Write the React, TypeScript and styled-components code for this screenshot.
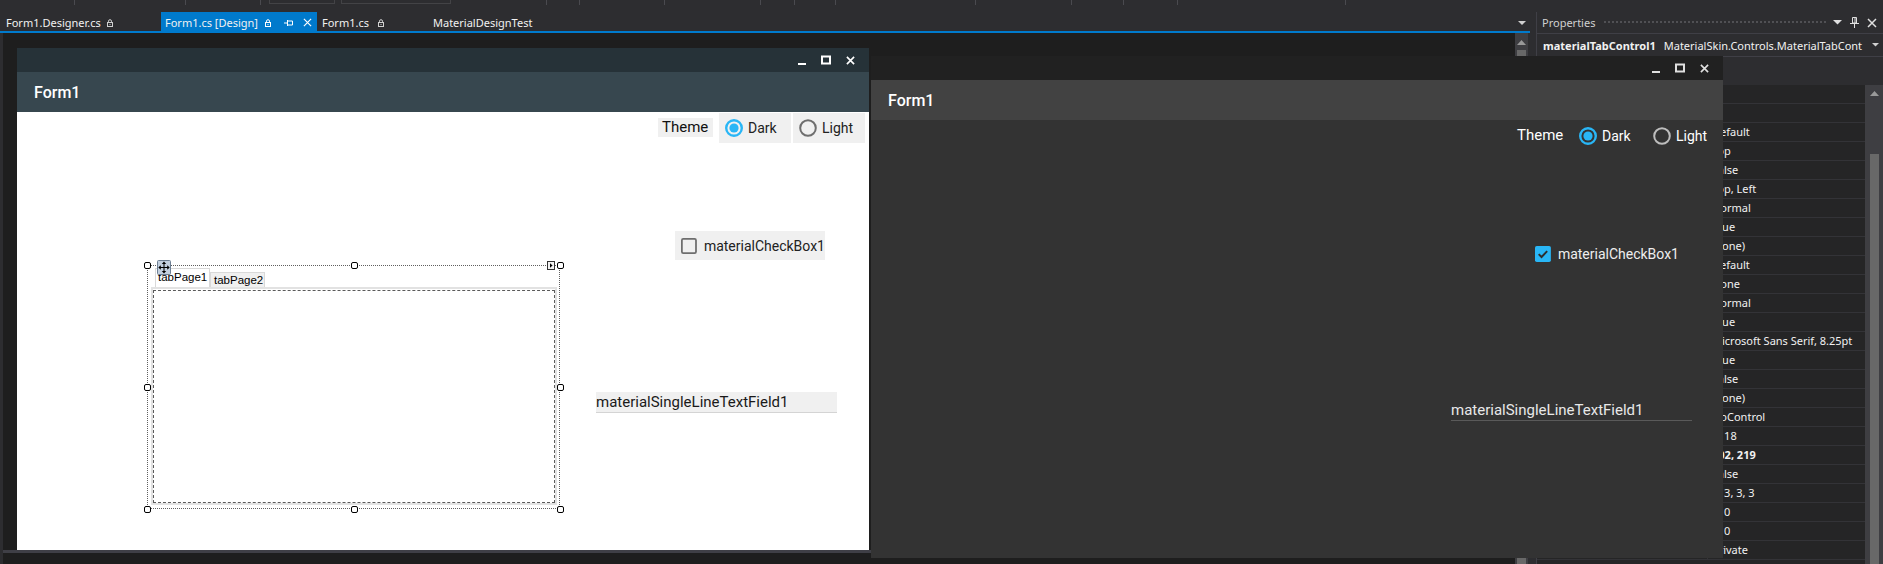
import * as React from 'react';
import styled, { createGlobalStyle, css } from 'styled-components';

const GlobalStyle = createGlobalStyle`
  html, body {
    margin: 0;
    padding: 0;
    background: #2d2d30;
  }
  body {
    overflow: hidden;
  }
`;

const Ide = styled.div`
  position: relative;
  width: 1883px;
  height: 564px;
  display: flex;
  flex-direction: column;
  background: #2d2d30;
  color: #f1f1f1;
  font-family: "Noto Sans", "Open Sans", sans-serif;
  font-size: 11px;
  overflow: hidden;
`;

/* ---------- toolbar remnant at the very top ---------- */

const TopStrip = styled.div`
  flex: none;
  height: 12px;
  display: flex;
  align-items: flex-start;
`;

const ToolSegment = styled.div<{ $w: number }>`
  flex: none;
  width: ${(p) => p.$w}px;
  height: 5px;
  box-sizing: border-box;
  border-right: 1px solid #4a4a4f;
`;

const ToolCombo = styled.div<{ $w: number; $gap: number }>`
  flex: none;
  width: ${(p) => p.$w}px;
  margin-left: ${(p) => p.$gap}px;
  height: 4px;
  box-sizing: border-box;
  border: 1px solid #434346;
  border-top: none;
`;

/* ---------- document well ---------- */

const Main = styled.div`
  flex: 1;
  display: flex;
  min-height: 0;
`;

const DocWell = styled.div`
  flex: none;
  width: 1530px;
  display: flex;
  flex-direction: column;
`;

const TabStrip = styled.div`
  flex: none;
  height: 19px;
  display: flex;
  border-bottom: 2px solid #007acc;
`;

const DocTab = styled.div<{ $w: number; $active?: boolean; $pad: number }>`
  flex: none;
  width: ${(p) => p.$w}px;
  box-sizing: border-box;
  padding: 2px 0 0 ${(p) => p.$pad}px;
  display: flex;
  align-items: center;
  background: ${(p) => (p.$active ? '#007acc' : 'transparent')};
  color: #f1f1f1;
  white-space: nowrap;
`;

const TabIcon = styled.span<{ $ml: number }>`
  display: inline-flex;
  margin-left: ${(p) => p.$ml}px;
`;

const ProjectName = styled.div`
  padding-top: 2px;
  display: flex;
  align-items: center;
  color: #f1f1f1;
  white-space: nowrap;
`;

const Spacer = styled.div`
  flex: 1;
`;

const StripArrow = styled.div`
  display: flex;
  align-items: center;
  padding: 2px 4px 0 0;
`;

const DesignerArea = styled.div`
  flex: 1;
  display: flex;
  min-height: 0;
`;

const WellEdge = styled.div`
  flex: none;
  width: 3px;
  background: #2d2d30;
`;

const Surface = styled.div`
  flex: 1;
  min-width: 0;
  display: flex;
  flex-direction: column;
  background: #1e1e1e;
`;

const Viewport = styled.div`
  flex: none;
  height: 517px;
  box-sizing: border-box;
  padding: 15px 0 0 14px;
  overflow: hidden;
`;

const HStrip = styled.div`
  flex: none;
  height: 3px;
  background: #3f3f46;
`;

const VScroll = styled.div`
  flex: none;
  width: 13px;
  margin-right: 2px;
  background: #3e3e42;
  display: flex;
  flex-direction: column;
  align-items: center;
`;

const ScrollUp = styled.div<{ $mt: number }>`
  display: flex;
  margin-top: ${(p) => p.$mt}px;
`;

const ScrollThumb = styled.div<{ $mt: number; $w: number }>`
  flex: 1;
  width: ${(p) => p.$w}px;
  margin-top: ${(p) => p.$mt}px;
  background: #686868;
`;

/* ---------- properties window ---------- */

const PropsPanel = styled.div`
  flex: none;
  width: 347px;
  margin-left: 6px;
  box-sizing: border-box;
  border-left: 1px solid #3f3f46;
  display: flex;
  flex-direction: column;
`;

const PropsHeader = styled.div`
  flex: none;
  height: 21px;
  display: flex;
  align-items: center;
  padding: 0 6px 0 5px;
  color: #d0d0d0;
`;

const Grip = styled.div`
  flex: 1;
  height: 5px;
  margin: 0 7px 0 8px;
  background-image: radial-gradient(circle, #505054 0.8px, transparent 1px);
  background-size: 4px 4px;
`;

const HeaderIcons = styled.div`
  display: flex;
  align-items: center;
  gap: 8px;
`;

const SelectorRow = styled.div`
  flex: none;
  height: 24px;
  box-sizing: border-box;
  display: flex;
  align-items: center;
  padding: 0 4px 0 6px;
  border-top: 1px solid #3f3f46;
  border-bottom: 1px solid #3f3f46;
  white-space: nowrap;
`;

const ObjectName = styled.span`
  font-weight: 700;
  margin-right: 8px;
`;

const PropsToolbar = styled.div`
  flex: none;
  height: 28px;
`;

const Grid = styled.div`
  flex: 1;
  min-height: 0;
  display: flex;
  background: #252526;
`;

const GridRows = styled.div`
  flex: 1;
  overflow: hidden;
`;

const GridRow = styled.div`
  height: 19px;
  box-sizing: border-box;
  display: flex;
  border-bottom: 1px solid #333337;
  line-height: 18px;
  white-space: nowrap;
`;

/* the name column lies under the running form, so only its frame is drawn */
const NameCell = styled.div`
  flex: none;
  width: 171px;
  box-sizing: border-box;
  border-right: 1px solid #333337;
`;

const ValueCell = styled.div<{ $bold?: boolean }>`
  padding-left: 4px;
  font-weight: ${(p) => (p.$bold ? 700 : 400)};
`;

const GridScroll = styled.div`
  flex: none;
  width: 18px;
  background: #3e3e42;
  display: flex;
  flex-direction: column;
  align-items: center;
`;

/* ---------- MaterialSkin forms ---------- */

const FormWindow = styled.div<{ $dark?: boolean }>`
  width: 852px;
  height: 560px;
  display: flex;
  flex-direction: column;
  background: ${(p) => (p.$dark ? '#333333' : '#ffffff')};
  font-family: Roboto, "Noto Sans", sans-serif;
`;

const RunningWindow = styled(FormWindow)`
  position: absolute;
  left: 871px;
  top: 56px;
  height: 502px;
  z-index: 2;
`;

const TitleBar = styled.div<{ $dark?: boolean }>`
  flex: none;
  height: 24px;
  display: flex;
  justify-content: flex-end;
  padding-right: 7px;
  background: ${(p) => (p.$dark ? '#212121' : '#263238')};
`;

const TitleButton = styled.div`
  width: 24px;
  height: 24px;
  display: flex;
  align-items: center;
  justify-content: center;
`;

const FormHeader = styled.div<{ $dark?: boolean }>`
  flex: none;
  height: 40px;
  display: flex;
  align-items: center;
  padding-left: 17px;
  background: ${(p) => (p.$dark ? '#424242' : '#37474f')};
  color: #ffffff;
  font-size: 16px;
  font-weight: 500;
`;

const Canvas = styled.div`
  position: relative;
  flex: 1;
`;

const located = css<{ $x: number; $y: number }>`
  position: absolute;
  left: ${(p) => p.$x}px;
  top: ${(p) => p.$y}px;
`;

const ThemeLabel = styled.div<{ $x: number; $y: number; $dark?: boolean }>`
  ${located};
  width: 55px;
  height: 19px;
  box-sizing: border-box;
  padding-left: 4px;
  line-height: 19px;
  font-size: 15px;
  color: ${(p) => (p.$dark ? '#ffffff' : '#111111')};
  background: ${(p) => (p.$dark ? 'transparent' : '#f0f0f0')};
`;

const RadioButton = styled.div<{ $x: number; $y: number; $dark?: boolean }>`
  ${located};
  width: 72px;
  height: 30px;
  box-sizing: border-box;
  padding-left: 6px;
  display: flex;
  align-items: center;
  gap: 5px;
  font-size: 14px;
  color: ${(p) => (p.$dark ? '#ffffff' : '#222222')};
  background: ${(p) => (p.$dark ? 'transparent' : '#f0f0f0')};
`;

const CheckBox = styled.div<{ $x: number; $y: number; $dark?: boolean }>`
  ${located};
  width: 150px;
  height: 29px;
  box-sizing: border-box;
  padding-left: 6px;
  display: flex;
  align-items: center;
  gap: 7px;
  font-size: 14px;
  color: ${(p) => (p.$dark ? '#eeeeee' : '#222222')};
  background: ${(p) => (p.$dark ? 'transparent' : '#f0f0f0')};
`;

const TextField = styled.div<{ $x: number; $y: number; $dark?: boolean }>`
  ${located};
  width: 241px;
  height: 21px;
  box-sizing: border-box;
  line-height: 20px;
  font-size: 15px;
  color: ${(p) => (p.$dark ? '#e8e8e8' : '#1a1a1a')};
  background: ${(p) => (p.$dark ? 'transparent' : '#f0f0f0')};
  border-bottom: 1px solid ${(p) => (p.$dark ? '#5a5a5a' : '#d4d4d4')};
  white-space: nowrap;
`;

/* ---------- designer selection around the tab control ---------- */

const TabFrame = styled.div<{ $x: number; $y: number }>`
  ${located};
  width: 413px;
  height: 244px;
  box-sizing: border-box;
  border: 1px dotted #5f5f5f;
  padding: 2px 2px 3px 3px;
  display: flex;
  flex-direction: column;
`;

const TabHeads = styled.div`
  flex: none;
  height: 19px;
  display: flex;
  align-items: flex-end;
  padding-left: 4px;
`;

const TabHead = styled.div<{ $active?: boolean }>`
  width: 55px;
  height: ${(p) => (p.$active ? 19 : 15)}px;
  box-sizing: border-box;
  padding-left: ${(p) => (p.$active ? 2 : 3)}px;
  border: 1px solid #d9d9d9;
  border-bottom: none;
  background: ${(p) => (p.$active ? '#ffffff' : '#f0f0f0')};
  font-family: "Liberation Sans", Arial, sans-serif;
  font-size: 11.5px;
  line-height: ${(p) => (p.$active ? 16 : 14)}px;
  color: #000000;
`;

const TabBody = styled.div`
  flex: 1;
  display: flex;
  border: 2px solid #e2e2e2;
  padding: 1px 0 0 0;
`;

const DashedArea = styled.div`
  flex: 1;
  border: 1px dashed #5a5a5a;
`;

const Handle = styled.div<{ $x: number; $y: number }>`
  position: absolute;
  left: ${(p) => p.$x - 4}px;
  top: ${(p) => p.$y - 4}px;
  width: 7px;
  height: 7px;
  box-sizing: border-box;
  border: 1px solid #000000;
  border-radius: 2px;
  background: #ffffff;
`;

const MoveGlyph = styled.div`
  position: absolute;
  left: 9px;
  top: -6px;
  display: flex;
`;

const SmartTag = styled.div`
  position: absolute;
  left: 399px;
  top: -5px;
  display: flex;
`;

/* ---------- glyphs ---------- */

const Lock: React.FC<{ color: string }> = ({ color }) => (
  <svg width="6" height="8" viewBox="0 0 6 8">
    <path d="M1.5 3.5V2.2a1.5 1.5 0 0 1 3 0v1.3" fill="none" stroke={color} />
    <rect x="0.5" y="3.5" width="5" height="4" fill="none" stroke={color} />
    <rect x="2.5" y="5" width="1" height="1" fill={color} />
  </svg>
);

const SidePin: React.FC = () => (
  <svg width="9" height="8" viewBox="0 0 9 8">
    <path d="M0 4H3M3.5 1V7M3.5 2H8.5V6H3.5" fill="none" stroke="#ffffff" />
  </svg>
);

const UpPin: React.FC = () => (
  <svg width="9" height="11" viewBox="0 0 9 11">
    <path d="M2.5 0.5H6.5V6H2.5ZM0 6.5H9M4.5 6.5V11" fill="none" stroke="#e0e0e0" />
    <path d="M5 1V6" stroke="#e0e0e0" />
  </svg>
);

const Cross: React.FC<{ size: number; color: string; width?: number }> = ({ size, color, width = 1.3 }) => (
  <svg width={size} height={size} viewBox="0 0 10 10">
    <path d="M1 1L9 9M9 1L1 9" stroke={color} strokeWidth={width} fill="none" />
  </svg>
);

const DownTri: React.FC<{ color: string; w?: number }> = ({ color, w = 8 }) => (
  <svg width={w} height={w / 2} viewBox="0 0 8 4">
    <path d="M0 0H8L4 4Z" fill={color} />
  </svg>
);

const UpTri: React.FC = () => (
  <svg width="9" height="5" viewBox="0 0 9 5">
    <path d="M0 5H9L4.5 0Z" fill="#999999" />
  </svg>
);

const MinGlyph: React.FC<{ color: string }> = ({ color }) => (
  <svg width="10" height="10" viewBox="0 0 10 10">
    <path d="M1 9H9" stroke={color} strokeWidth="2" />
  </svg>
);

const MaxGlyph: React.FC<{ color: string }> = ({ color }) => (
  <svg width="10" height="10" viewBox="0 0 10 10">
    <rect x="1" y="1.5" width="8" height="7" fill="none" stroke={color} strokeWidth="2" />
  </svg>
);

const RadioGlyph: React.FC<{ checked?: boolean; dark?: boolean }> = ({ checked, dark }) => (
  <svg width="18" height="18" viewBox="0 0 18 18">
    <circle
      cx="9"
      cy="9"
      r="7.8"
      fill="none"
      stroke={checked ? '#29b6f6' : dark ? '#bdbdbd' : '#6e6e6e'}
      strokeWidth={checked ? 2.4 : 2}
    />
    {checked && <circle cx="9" cy="9" r="4.6" fill="#29b6f6" />}
  </svg>
);

const CheckGlyph: React.FC<{ checked?: boolean }> = ({ checked }) =>
  checked ? (
    <svg width="18" height="18" viewBox="0 0 18 18">
      <rect x="0" y="0" width="18" height="18" rx="2" fill="#29b6f6" />
      <path d="M4.2 9.2L7.4 12.4L13.8 5.8" fill="none" stroke="#2e2e2e" strokeWidth="2.2" />
    </svg>
  ) : (
    <svg width="18" height="18" viewBox="0 0 18 18">
      <rect x="1" y="1" width="16" height="16" rx="1.5" fill="none" stroke="#6e6e6e" strokeWidth="2" />
    </svg>
  );

/* ---------- data ---------- */

const TOOL_SEGMENTS = [75, 111, 75];
const TOOL_SEGMENTS_AFTER = [96, 33, 85, 96, 34, 41, 140, 96, 52, 54, 168];

// values of the property grid; the names sit under the running form
const PROPERTY_VALUES: [string, boolean?][] = [
  [''],
  [''],
  ['Default'],
  ['Top'],
  ['False'],
  ['Top, Left'],
  ['Normal'],
  ['True'],
  ['(none)'],
  ['Default'],
  ['None'],
  ['Normal'],
  ['True'],
  ['Microsoft Sans Serif, 8.25pt'],
  ['True'],
  ['False'],
  ['(none)'],
  ['NoControl'],
  ['0, 18'],
  ['102, 219', true],
  ['False'],
  ['3, 3, 3, 3'],
  ['0, 0'],
  ['0, 0'],
  ['Private'],
];

const FRAME_W = 413;
const FRAME_H = 244;
const HANDLES: [number, number][] = [
  [0, 0], [FRAME_W / 2, 0], [FRAME_W, 0],
  [0, FRAME_H / 2], [FRAME_W, FRAME_H / 2],
  [0, FRAME_H], [FRAME_W / 2, FRAME_H], [FRAME_W, FRAME_H],
];

/* ---------- parts ---------- */

const FormChrome: React.FC<{ dark?: boolean }> = ({ dark }) => {
  const glyph = dark ? '#e0e0e0' : '#ffffff';
  return (
    <>
      <TitleBar $dark={dark}>
        <TitleButton><MinGlyph color={glyph} /></TitleButton>
        <TitleButton><MaxGlyph color={glyph} /></TitleButton>
        <TitleButton><Cross size={9} color={glyph} width={1.8} /></TitleButton>
      </TitleBar>
      <FormHeader $dark={dark}>Form1</FormHeader>
    </>
  );
};

const FormControls: React.FC<{ dark?: boolean }> = ({ dark }) => (
  <>
    <ThemeLabel $x={dark ? 642 : 641} $y={6} $dark={dark}>Theme</ThemeLabel>
    <RadioButton $x={702} $y={1} $dark={dark}>
      <RadioGlyph checked dark={dark} />
      Dark
    </RadioButton>
    <RadioButton $x={776} $y={1} $dark={dark}>
      <RadioGlyph dark={dark} />
      Light
    </RadioButton>
    <CheckBox $x={658} $y={119} $dark={dark}>
      <CheckGlyph checked={dark} />
      materialCheckBox1
    </CheckBox>
    <TextField $x={dark ? 580 : 579} $y={280} $dark={dark}>materialSingleLineTextField1</TextField>
  </>
);

const DesignedTabControl: React.FC = () => (
  <TabFrame $x={130} $y={153}>
    <TabHeads>
      <TabHead $active>tabPage1</TabHead>
      <TabHead>tabPage2</TabHead>
    </TabHeads>
    <TabBody>
      <DashedArea />
    </TabBody>
    {HANDLES.map(([x, y], i) => (
      <Handle key={i} $x={x} $y={y} />
    ))}
    <MoveGlyph>
      <svg width="14" height="15" viewBox="0 0 14 15">
        <rect x="0.5" y="0.5" width="13" height="14" rx="1" fill="#c3d0df" stroke="#6d7f93" />
        <path d="M7 3V12M2.5 7.5H11.5" stroke="#000" />
        <path d="M7 1.5L4.8 4H9.2ZM7 13.5L4.8 11H9.2ZM1.3 7.5L3.8 5.3V9.7ZM12.7 7.5L10.2 5.3V9.7Z" fill="#000" />
      </svg>
    </MoveGlyph>
    <SmartTag>
      <svg width="8" height="9" viewBox="0 0 8 9">
        <rect x="0.5" y="0.5" width="7" height="8" fill="#f2f2f2" stroke="#333" />
        <path d="M3 2.3L5.6 4.5L3 6.7Z" fill="#000" />
      </svg>
    </SmartTag>
  </TabFrame>
);

const App: React.FC = () => {
  return (
    <>
      <GlobalStyle />
      <Ide>
        <TopStrip>
          {TOOL_SEGMENTS.map((w, i) => (
            <ToolSegment key={i} $w={w} />
          ))}
          <ToolCombo $w={66} $gap={8} />
          <ToolCombo $w={110} $gap={6} />
          {TOOL_SEGMENTS_AFTER.map((w, i) => (
            <ToolSegment key={i} $w={w} />
          ))}
        </TopStrip>

        <Main>
          <DocWell>
            <TabStrip>
              <DocTab $w={161} $pad={6}>
                Form1.Designer.cs
                <TabIcon $ml={6}><Lock color="#d0d0d0" /></TabIcon>
              </DocTab>
              <DocTab $w={156} $pad={4} $active>
                Form1.cs [Design]
                <TabIcon $ml={7}><Lock color="#ffffff" /></TabIcon>
                <TabIcon $ml={13}><SidePin /></TabIcon>
                <TabIcon $ml={10}><Cross size={9} color="#ffffff" /></TabIcon>
              </DocTab>
              <DocTab $w={116} $pad={5}>
                Form1.cs
                <TabIcon $ml={9}><Lock color="#d0d0d0" /></TabIcon>
              </DocTab>
              <ProjectName>MaterialDesignTest</ProjectName>
              <Spacer />
              <StripArrow><DownTri color="#d0d0d0" /></StripArrow>
            </TabStrip>

            <DesignerArea>
              <WellEdge />
              <Surface>
                <Viewport>
                  <FormWindow>
                    <FormChrome />
                    <Canvas>
                      <FormControls />
                      <DesignedTabControl />
                    </Canvas>
                  </FormWindow>
                </Viewport>
                <HStrip />
              </Surface>
              <VScroll>
                <ScrollUp $mt={7}><UpTri /></ScrollUp>
                <ScrollThumb $mt={5} $w={9} />
              </VScroll>
            </DesignerArea>
          </DocWell>

          <PropsPanel>
            <PropsHeader>
              Properties
              <Grip />
              <HeaderIcons>
                <DownTri color="#e0e0e0" w={9} />
                <UpPin />
                <Cross size={10} color="#e0e0e0" width={1.5} />
              </HeaderIcons>
            </PropsHeader>
            <SelectorRow>
              <ObjectName>materialTabControl1</ObjectName>
              MaterialSkin.Controls.MaterialTabCont
              <Spacer />
              <DownTri color="#d0d0d0" w={7} />
            </SelectorRow>
            <PropsToolbar />
            <Grid>
              <GridRows>
                {PROPERTY_VALUES.map(([value, bold], i) => (
                  <GridRow key={i}>
                    <NameCell />
                    <ValueCell $bold={bold}>{value}</ValueCell>
                  </GridRow>
                ))}
              </GridRows>
              <GridScroll>
                <ScrollUp $mt={6}><UpTri /></ScrollUp>
                <ScrollThumb $mt={58} $w={9} />
              </GridScroll>
            </Grid>
          </PropsPanel>
        </Main>

        <RunningWindow $dark>
          <FormChrome dark />
          <Canvas>
            <FormControls dark />
          </Canvas>
        </RunningWindow>
      </Ide>
    </>
  );
};

export default App;
